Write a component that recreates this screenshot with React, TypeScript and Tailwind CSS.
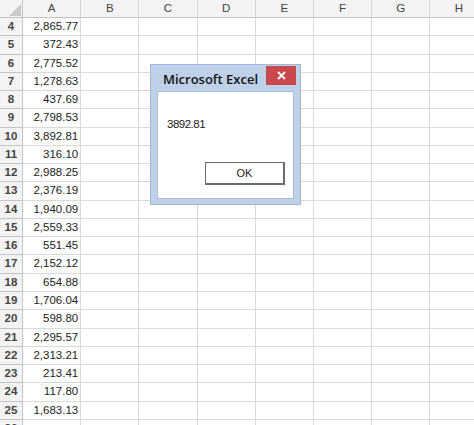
import React from "react";

const rows: [number, string][] = [
  [4, "2,865.77"],
  [5, "372.43"],
  [6, "2,775.52"],
  [7, "1,278.63"],
  [8, "437.69"],
  [9, "2,798.53"],
  [10, "3,892.81"],
  [11, "316.10"],
  [12, "2,988.25"],
  [13, "2,376.19"],
  [14, "1,940.09"],
  [15, "2,559.33"],
  [16, "551.45"],
  [17, "2,152.12"],
  [18, "654.88"],
  [19, "1,706.04"],
  [20, "598.80"],
  [21, "2,295.57"],
  [22, "2,313.21"],
  [23, "213.41"],
  [24, "117.80"],
  [25, "1,683.13"],
  [26, ""],
];

const cols = ["A", "B", "C", "D", "E", "F", "G", "H"];

export default function App() {
  return (
    <div
      className="relative w-[474px] h-[425px] overflow-hidden bg-white"
      style={{ fontFamily: '"Liberation Sans", Arial, sans-serif' }}
    >
      {/* header row */}
      <div className="flex h-[18px] bg-[#f3f3f3] border-b border-[#c4c4c4] box-border">
        <div className="relative w-[23px] shrink-0 border-r border-[#c4c4c4] box-border">
          <svg className="absolute left-[9px] top-[4px]" width="12" height="12" viewBox="0 0 12 12">
            <polygon points="12,0 12,12 0,12" fill="#c9c9c9" />
          </svg>
        </div>
        {cols.map((c) => (
          <div
            key={c}
            className="w-[58.2px] shrink-0 border-r border-[#d4d4d4] box-border flex items-center justify-center text-[11.5px] text-[#444]"
          >
            {c}
          </div>
        ))}
      </div>
      {rows.map(([n, v]) => (
        <div key={n} className="flex h-[18.27px]">
          <div className="w-[23px] shrink-0 bg-[#f3f3f3] border-r border-b border-[#c4c4c4] box-border flex items-center justify-center text-[11.5px] font-bold text-[#444]">
            {n}
          </div>
          {cols.map((c, i) => (
            <div
              key={c}
              className="w-[58.2px] shrink-0 border-r border-b border-[#dadada] box-border flex items-center justify-end pr-[2px] text-[11.5px] text-[#222]"
            >
              {i === 0 ? v : ""}
            </div>
          ))}
        </div>
      ))}

      {/* dialog */}
      <div className="absolute left-[150px] top-[64px] w-[151px] h-[141px] bg-[#bfd1e8] border border-[#9fb6d6] box-border flex flex-col">
        <div className="relative h-[26px] shrink-0">
          <div
            className="absolute left-[12px] top-[5px] text-[13px] leading-[18px] font-semibold text-[#111] whitespace-nowrap"
            style={{ fontFamily: '"Open Sans", "Noto Sans", sans-serif' }}
          >
            Microsoft Excel
          </div>
          <div className="absolute left-[115px] top-[1px] w-[30px] h-[19px] bg-[#c8494b] flex items-center justify-center">
            <svg width="9" height="9" viewBox="0 0 9 9">
              <path d="M1 1 L8 8 M8 1 L1 8" stroke="#ffffff" strokeWidth="1.8" />
            </svg>
          </div>
        </div>
        <div className="mx-[6px] mb-[5px] flex-1 bg-white border border-[#a9bcd6] box-border flex flex-col">
          <div className="pl-[9px] pt-[24px] text-[11.5px] tracking-[-0.5px] text-[#222] h-[70px]">
            3892.81
          </div>
          <div className="flex justify-end pr-[8px]">
            <div className="w-[80px] h-[23px] border border-[#6b6b6b] border-r-2 border-b-2 box-border flex items-center justify-center text-[11px] text-[#222] bg-white">
              OK
            </div>
          </div>
        </div>
      </div>
    </div>
  );
}
